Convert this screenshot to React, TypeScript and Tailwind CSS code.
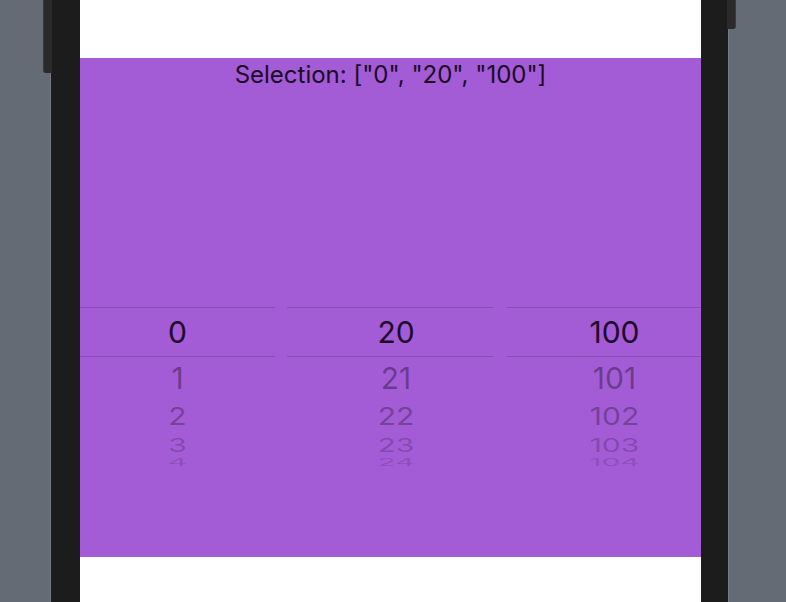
import React from "react";

type Row = { label: string; h: string; scale: string; color: string };

const font = { fontFamily: "Inter, 'Liberation Sans', sans-serif" };

function Wheel({ values, width, shift }: { values: string[]; width: string; shift: string }) {
  const rows: Row[] = [
    { label: values[1], h: "h-[42px]", scale: "scale-y-[1]", color: "text-black/35" },
    { label: values[2], h: "h-[34px]", scale: "scale-y-[0.8]", color: "text-black/30" },
    { label: values[3], h: "h-[24px]", scale: "scale-y-[0.6]", color: "text-black/20" },
    { label: values[4], h: "h-[10px]", scale: "scale-y-[0.35]", color: "text-black/15" },
  ];
  return (
    <div className={`${width} flex flex-col`}>
      <div className="h-[50px] border-y border-black/15 flex items-center justify-center">
        <span className={`${shift} text-[30px] leading-none text-[#1d0a2a]`}>{values[0]}</span>
      </div>
      {rows.map((r, i) => (
        <div key={i} className={`${r.h} flex items-center justify-center overflow-hidden`}>
          <span className={`${shift} text-[30px] ${r.scale} ${r.color} leading-none inline-block`}>{r.label}</span>
        </div>
      ))}
    </div>
  );
}

export default function App() {
  return (
    <div className="w-[786px] h-[602px] bg-[#646b75] relative overflow-hidden flex" style={font}>
      <div className="w-[50px]" />
      <div className="w-px bg-[#737b84]" />
      <div className="w-[29px] bg-[#1c1c1c]" />
      <div className="w-[621px] flex flex-col bg-white">
        <div className="h-[58px] bg-white" />
        <div className="h-[499px] bg-[#a35bd6] flex flex-col">
          <div className="pt-[3px] text-center text-[24px] leading-[28px] text-[#1a0a26]">
            Selection: ["0", "20", "100"]
          </div>
          <div className="mt-[218px] flex">
            <Wheel values={["0", "1", "2", "3", "4"]} width="w-[195px]" shift="" />
            <div className="w-[12px]" />
            <Wheel values={["20", "21", "22", "23", "24"]} width="w-[206px]" shift="translate-x-[6px]" />
            <div className="w-[13px]" />
            <Wheel values={["100", "101", "102", "103", "104"]} width="w-[195px]" shift="translate-x-[11px]" />
          </div>
        </div>
        <div className="flex-1 bg-white" />
      </div>
      <div className="w-[27px] bg-[#1c1c1c]" />
      <div className="w-px bg-[#737b84]" />
      <div className="flex-1" />
      {/* side buttons */}
      <div className="absolute left-[43px] top-0 w-[9px] h-[73px] bg-[#2a2a2a] rounded-bl-[3px] border-l border-[#3a3a3a]" />
      <div className="absolute left-[727px] top-0 w-[9px] h-[29px] bg-[#2a2a2a] rounded-br-[3px] border-r border-[#3a3a3a]" />
    </div>
  );
}
